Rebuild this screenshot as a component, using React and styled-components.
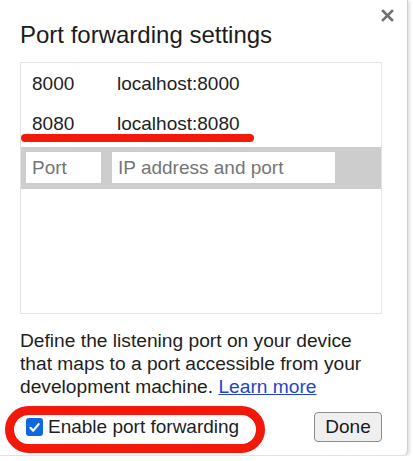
import React from "react";
import styled, { createGlobalStyle } from "styled-components";

const GlobalStyle = createGlobalStyle`
  body {
    margin: 0;
    background: #ffffff;
    font-family: "Liberation Sans", Arial, sans-serif;
  }
`;

const ports = [
  { port: "8000", address: "localhost:8000" },
  { port: "8080", address: "localhost:8080" },
];

export default function App() {
  return (
    <>
      <GlobalStyle />
      <Dialog>
        <Header>
          <Title>Port forwarding settings</Title>
          <Close aria-label="Close">
            <svg width="13" height="13" viewBox="0 0 13 13">
              <path
                d="M2 2 L11 11 M11 2 L2 11"
                stroke="#6f6f6f"
                strokeWidth="2.6"
                strokeLinecap="square"
              />
            </svg>
          </Close>
        </Header>

        <List>
          {ports.map((p) => (
            <Row key={p.port}>
              <span>{p.port}</span>
              <span>{p.address}</span>
            </Row>
          ))}
          <NewRow>
            <Field placeholder="Port" $width="75px" />
            <Field placeholder="IP address and port" $width="223px" />
          </NewRow>
          <Underline />
        </List>

        <Description>
          Define the listening port on your device that maps to a port
          accessible from your development machine.{" "}
          <a href="#learn">Learn more</a>
        </Description>

        <Footer>
          <CheckLabel>
            <Box>
              <svg width="13" height="13" viewBox="0 0 13 13">
                <path
                  d="M2.4 6.8 L5.2 9.6 L10.6 3.2"
                  fill="none"
                  stroke="#ffffff"
                  strokeWidth="2.2"
                  strokeLinecap="round"
                  strokeLinejoin="round"
                />
              </svg>
            </Box>
            Enable port forwarding
            <Oval />
          </CheckLabel>
          <DoneButton>Done</DoneButton>
        </Footer>
      </Dialog>
    </>
  );
}

const Dialog = styled.div`
  width: 408px;
  height: 456px;
  box-sizing: border-box;
  padding: 9px 25px 0 20px;
  background: #ffffff;
  border-right: 1px solid #cfcfcf;
  border-bottom: 1px solid #e2e2e2;
  border-bottom-right-radius: 6px;
  box-shadow: 2px 1px 3px rgba(0, 0, 0, 0.12);
  color: #1e1e1e;
`;

const Header = styled.div`
  display: flex;
  justify-content: space-between;
  align-items: flex-start;
  margin-right: -12px;
`;

const Title = styled.h1`
  margin: 11px 0 0;
  font-size: 24px;
  font-weight: normal;
  line-height: 29px;
  color: #1b1b1b;
`;

const Close = styled.button`
  border: none;
  background: none;
  padding: 0;
  width: 13px;
  height: 13px;
  display: flex;
  cursor: pointer;
`;

const List = styled.div`
  position: relative;
  margin-top: 13px;
  height: 252px;
  box-sizing: border-box;
  border: 1px solid #e4e4e4;
  padding-top: 1px;
`;

const Row = styled.div`
  display: grid;
  grid-template-columns: 85px 1fr;
  align-items: center;
  height: 40px;
  padding-left: 11px;
  font-size: 19px;
`;

const NewRow = styled.div`
  display: flex;
  align-items: center;
  gap: 11px;
  margin-top: 3px;
  padding: 5px 5px 6px;
  background: #cdcdcd;
`;

const Field = styled.input`
  width: ${(p) => p.$width};
  height: 31px;
  box-sizing: border-box;
  border: none;
  outline: none;
  padding: 0 6px;
  font-family: inherit;
  font-size: 19px;
  background: #ffffff;

  &::placeholder {
    color: #757575;
  }
`;

const Underline = styled.div`
  position: absolute;
  left: 0;
  top: 71px;
  width: 233px;
  height: 8px;
  border-radius: 4px;
  background: #f2190b;
`;

const Description = styled.p`
  margin: 15px 0 0;
  font-size: 19.2px;
  line-height: 23px;

  a {
    color: #1f45cf;
    text-decoration: underline;
  }
`;

const Footer = styled.div`
  display: flex;
  align-items: center;
  justify-content: space-between;
  margin-top: 14px;
  height: 30px;
`;

const CheckLabel = styled.label`
  position: relative;
  display: flex;
  align-items: center;
  gap: 5px;
  height: 30px;
  padding-left: 6px;
  font-size: 19px;
`;

const Box = styled.span`
  width: 17px;
  height: 18px;
  border-radius: 3px;
  background: #1068e0;
  display: flex;
  align-items: center;
  justify-content: center;
`;

const Oval = styled.span`
  position: absolute;
  left: -15px;
  top: -6px;
  width: 260px;
  height: 47px;
  box-sizing: border-box;
  border: 9px solid #f2190b;
  border-radius: 24px;
  pointer-events: none;
`;

const DoneButton = styled.button`
  width: 68px;
  height: 30px;
  border: 1px solid #8c8c8c;
  border-radius: 4px;
  background: #efefef;
  font-family: inherit;
  font-size: 19px;
  color: #1b1b1b;
  padding: 0;
`;
